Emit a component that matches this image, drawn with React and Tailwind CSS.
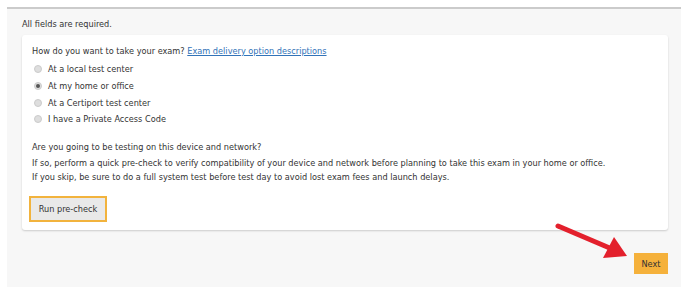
import React from "react";

function Radio({ checked, label }) {
  return (
    <label className="flex items-center h-[16.7px]">
      <span className="w-[8px] h-[8px] rounded-full bg-[#dedede] border border-[#cbcbcb] flex items-center justify-center ml-[2px]">
        {checked && <span className="w-[4px] h-[4px] rounded-full bg-[#555]" />}
      </span>
      <span className="ml-[6px]">{label}</span>
    </label>
  );
}

export default function App() {
  return (
    <div className="w-[681px] h-[287px] bg-white overflow-hidden relative text-[#333] text-[9.1px] leading-[14px]" style={{ fontFamily: '"DejaVu Sans Condensed", "DejaVu Sans", Verdana, sans-serif' }}>
      <div className="ml-[7px] mt-[7px] h-[280px] border-t-2 border-[#cbcbcb] bg-[#f7f7f7] pl-[15px] pr-[13px] flex flex-col">
        <div className="mt-[8px] h-[16px]">All fields are required.</div>
        <div className="mt-[2px] bg-white rounded-[3px] shadow-[0_1px_2px_rgba(0,0,0,0.18)] h-[195px] pl-[10px] pt-[9px]">
          <div>
            How do you want to take your exam?{" "}
            <a className="text-[#3273b8] underline">Exam delivery option descriptions</a>
          </div>
          <div className="mt-[3px] flex flex-col">
            <Radio label="At a local test center" />
            <Radio checked label="At my home or office" />
            <Radio label="At a Certiport test center" />
            <Radio label="I have a Private Access Code" />
          </div>
          <div className="mt-[12px]">Are you going to be testing on this device and network?</div>
          <div className="mt-[2px]">If so, perform a quick pre-check to verify compatibility of your device and network before planning to take this exam in your home or office.</div>
          <div>If you skip, be sure to do a full system test before test day to avoid lost exam fees and launch delays.</div>
          <button className="mt-[12px] -ml-[3px] w-[78px] h-[26px] border-2 border-[#f2b33d] bg-[#e9e9e9] text-[#333] text-[9.1px] flex items-center justify-center">
            Run pre-check
          </button>
        </div>
        <div className="flex justify-end mt-[23px]">
          <button className="w-[34px] h-[21px] bg-[#f5b13b] text-[#333] text-[9.1px] flex items-center justify-center">Next</button>
        </div>
      </div>
      <svg className="absolute left-[550px] top-[220px]" width="85" height="45" viewBox="0 0 85 45">
        <line x1="8" y1="6" x2="62" y2="29" stroke="#e3202c" strokeWidth="5" strokeLinecap="round" />
        <polygon points="77,36 53,38 64,17" fill="#e3202c" />
      </svg>
    </div>
  );
}
